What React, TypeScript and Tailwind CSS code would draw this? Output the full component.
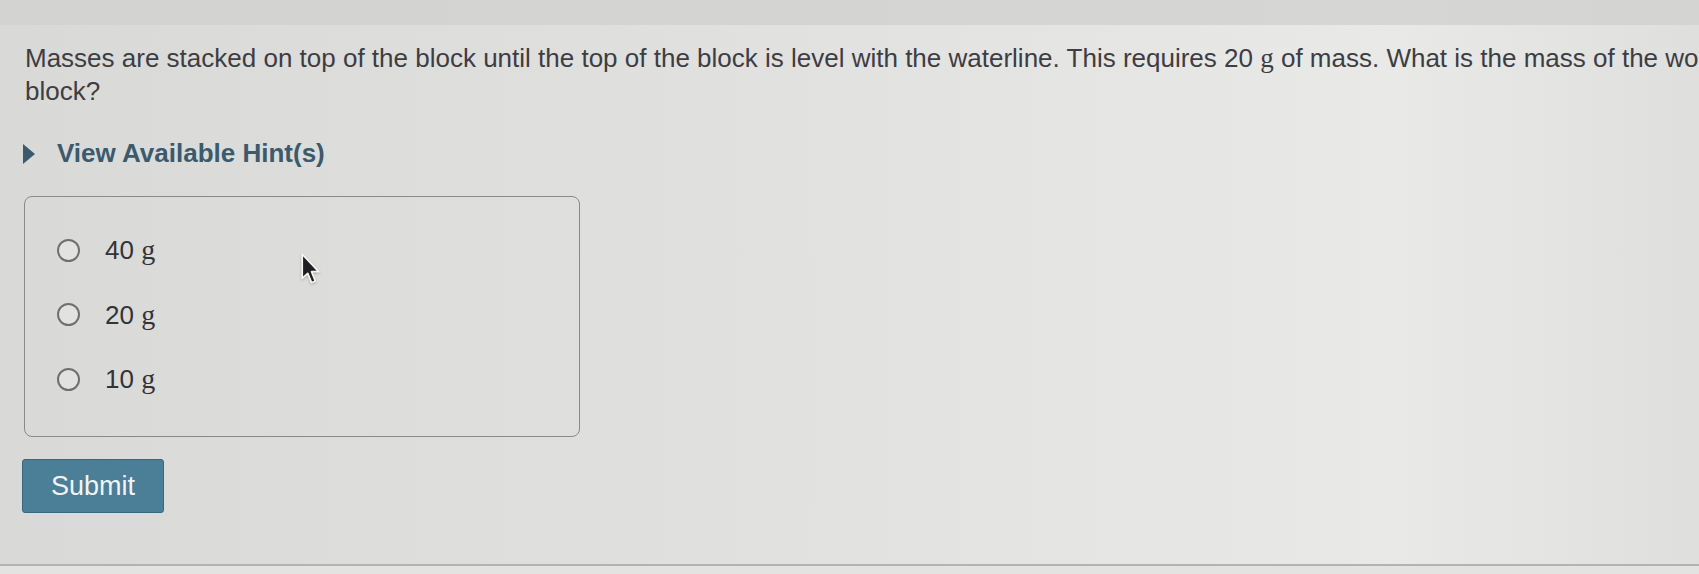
import React from 'react'

const OPTIONS = ['40', '20', '10']

const SANS = "font-['Liberation_Sans',Arial,sans-serif]"

function Radio({ value }: { value: string }) {
  return (
    <label className="flex items-center h-[64.5px] cursor-pointer">
      <span className="w-[23px] h-[23px] rounded-full border-[2.5px] border-[#6f6f6f] bg-[#e2e2e0] shrink-0" />
      <span className="ml-[25px] text-[26px] leading-[33px] text-[#333338]">
        {value} <span className="font-['Liberation_Serif','Times_New_Roman',serif] text-[28px]">g</span>
      </span>
    </label>
  )
}

export default function App() {
  return (
    <div
      className={`relative w-[1699px] h-[574px] overflow-hidden ${SANS} bg-[linear-gradient(90deg,#d9d9d7_0%,#dfdfdd_35%,#e4e4e2_60%,#e9e9e7_82%,#dfdfdd_100%)] flex flex-col`}
    >
      {/* top strip of the page */}
      <div className="h-[25px] shrink-0 bg-[#d1d1cf]/80" />

      <div className="pl-[25px] pt-[17px] flex flex-col flex-1">
        <p className="w-[1760px] text-[26px] leading-[33px] text-[#3d3d42]">
          Masses are stacked on top of the block until the top of the block is level with the waterline. This requires 20{' '}
          <span className="font-['Liberation_Serif','Times_New_Roman',serif] text-[27px]">g</span> of mass. What is the
          mass of the wooden block?
        </p>

        <button className="mt-[29px] -ml-[2px] flex items-center self-start text-[#3a5a6d]">
          <svg width="12" height="20" viewBox="0 0 12 20" className="shrink-0">
            <polygon points="0,0 12,10 0,20" fill="#3a5a6d" />
          </svg>
          <span className="ml-[22px] text-[26px] leading-[33px] font-bold">View Available Hint(s)</span>
        </button>

        <div className="mt-[26px] -ml-[1px] w-[556px] h-[241px] rounded-[8px] border-[1.5px] border-[#8a8a8a] pl-[32px] pt-[21px] flex flex-col">
          {OPTIONS.map((o) => (
            <Radio key={o} value={o} />
          ))}
        </div>

        <button className="mt-[22px] -ml-[3px] self-start w-[142px] h-[54px] rounded-[3px] bg-[#4a7f97] border border-[#37687e] text-[#f2f4f4] text-[27px] leading-none">
          Submit
        </button>

        <div className="mt-auto" />
      </div>

      {/* page bottom rule */}
      <div className="h-[10px] shrink-0 border-t-[2px] border-[#b3b3b1] bg-[#e3e3e1]" />

      {/* mouse pointer */}
      <svg
        width="22"
        height="33"
        viewBox="0 0 20 30"
        className="absolute left-[300px] top-[253px] drop-shadow-[0_1px_1px_rgba(0,0,0,0.25)]"
      >
        <path
          d="M2 1 L2 23 L7 18.5 L10.5 27 L14 25.5 L10.5 17 L17 17 Z"
          fill="#1f1f22"
          stroke="#f5f5f5"
          strokeWidth="1.6"
          strokeLinejoin="round"
        />
      </svg>
    </div>
  )
}
